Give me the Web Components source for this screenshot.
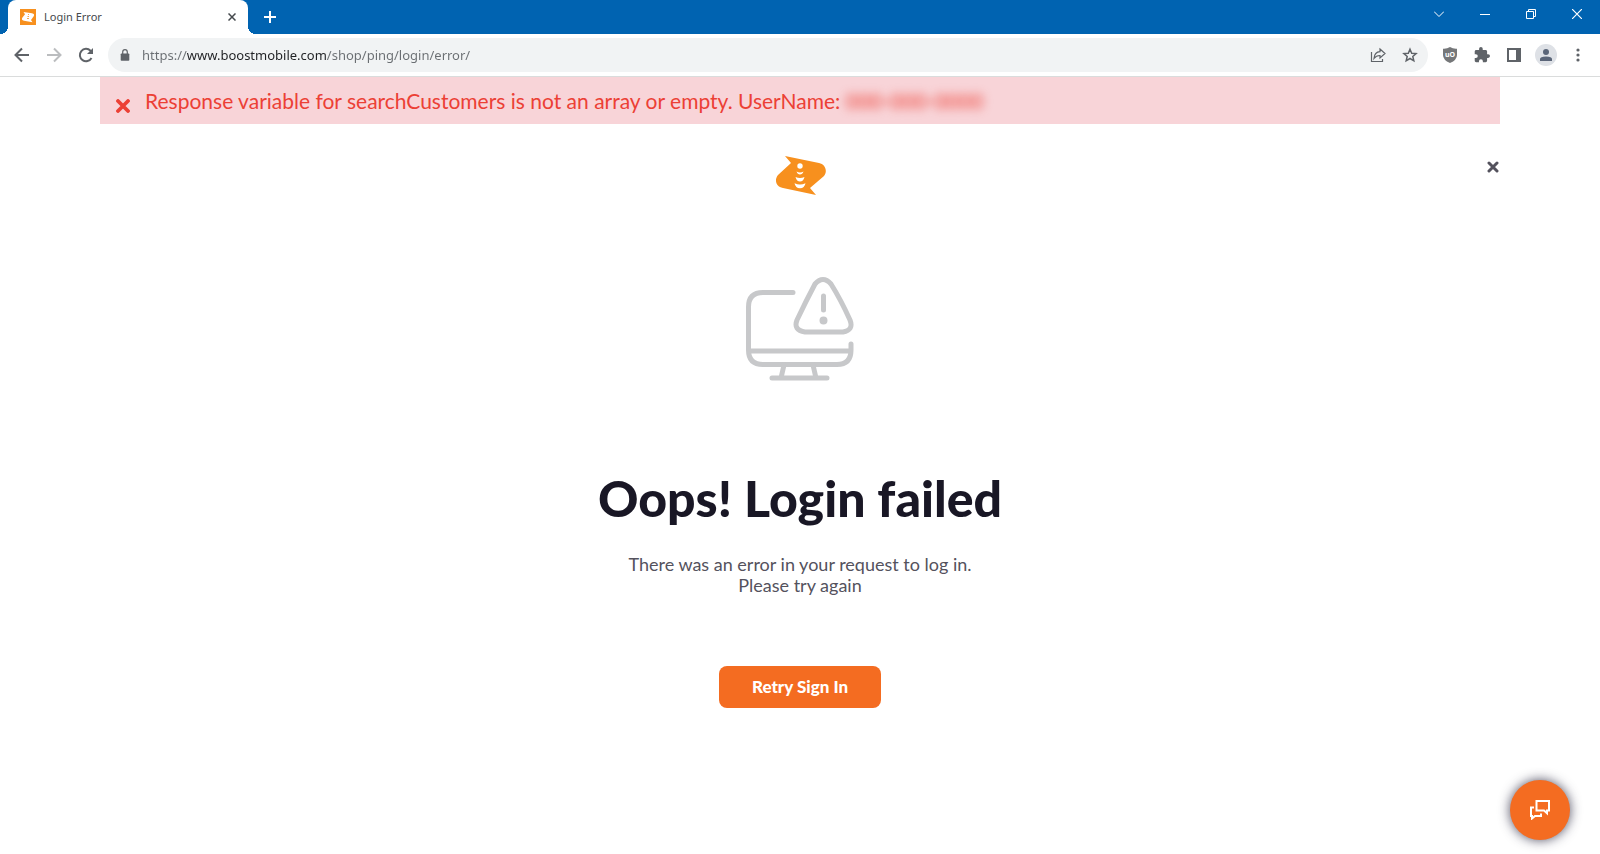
<!DOCTYPE html>
<html lang="en">
<head>
<meta charset="utf-8">
<meta name="viewport" content="width=device-width, initial-scale=1">
<title>Login Error</title>
<style>
  body {
    margin: 0;
    background: #fff;
    font-family: Lato, "Liberation Sans", sans-serif;
    --orange: #f46c21;
    --color-text: #54525d;
  }
</style>
</head>
<body>
<browser-window>
  <tab-strip slot="tabs">Login Error</tab-strip>
  <tool-bar slot="toolbar" url="https://www.boostmobile.com/shop/ping/login/error/"></tool-bar>
  <error-banner>Response variable for searchCustomers is not an array or empty. UserName: <span slot="user">000-000-0000</span></error-banner>
  <page-header></page-header>
  <login-failed>
    <span slot="title">Oops! Login failed</span>
    There was an error in your request to log in.<br>Please try again
    <span slot="action">Retry Sign In</span>
  </login-failed>
  <chat-button></chat-button>
</browser-window>

<script>
function define(name, html, setup) {
  const template = document.createElement('template');
  template.innerHTML = html;
  customElements.define(name, class extends HTMLElement {
    constructor() {
      super();
      this.attachShadow({ mode: 'open' });
      this.shadowRoot.appendChild(template.content.cloneNode(true));
    }

    connectedCallback() {
      if (setup) setup(this);
    }
  });
}

define('browser-window', `
  <style>
    :host { display: flex; flex-direction: column; min-height: 100vh; }
    main { flex: 1; padding: 0 100px; }
  </style>
  <slot name="tabs"></slot>
  <slot name="toolbar"></slot>
  <main><slot></slot></main>
`);

define('tab-strip', `
  <style>
    :host {
      display: flex;
      height: 34px;
      background: #0063b1;
      font: 11px/16px "Noto Sans", sans-serif;
      color: #45494d;
    }
    button { border: 0; padding: 0; background: none; color: #fff; display: grid; place-items: center; }
    .tab {
      position: relative;
      box-sizing: border-box;
      display: flex;
      align-items: center;
      gap: 8px;
      width: 240px;
      margin-left: 8px;
      padding: 0 8px 0 12px;
      background: #fff;
      border-radius: 8px 8px 0 0;
    }
    /* curved feet of the active tab */
    .tab::before, .tab::after {
      content: "";
      position: absolute;
      bottom: 0;
      width: 8px;
      height: 8px;
    }
    .tab::before { left: -8px; background: radial-gradient(circle at 0 0, transparent 8px, #fff 8px); }
    .tab::after { right: -8px; background: radial-gradient(circle at 100% 0, transparent 8px, #fff 8px); }
    .title { flex: 1; }
    .tab button { width: 16px; height: 16px; color: #45494d; }
    .new { width: 28px; margin-left: 8px; }
    .controls { display: flex; margin-left: auto; height: 28px; }
    .controls button { width: 46px; }
    svg { display: block; fill: none; stroke: currentColor; }
  </style>
  <div class="tab">
    <svg width="16" height="16" viewBox="0 0 16 16" stroke="none"><path fill="#f7901e" stroke="none" d="M0 0h16v16H0z"/><path fill="#fff" stroke="none" d="M3.500 3l8.500 1.300q3 .7 1.700 3L11 11l1.500 2.300-8.500-1.500Q1 11 2.300 8.700L5 5.200z"/><path stroke="#f7901e" stroke-width=".8" d="M8 5.500h1M7.500 7.500h1.500M7 9.500h2"/></svg>
    <span class="title"><slot></slot></span>
    <button aria-label="Close tab"><svg width="8" height="8" viewBox="0 0 8 8" stroke-width="1.500"><path d="M.5.5l7 7M7.500.5l-7 7"/></svg></button>
  </div>
  <button class="new" aria-label="New tab"><svg width="12" height="12" viewBox="0 0 12 12" stroke-width="2"><path d="M6 0v12M0 6h12"/></svg></button>
  <div class="controls">
    <button aria-label="Search tabs"><svg width="10" height="10" viewBox="0 0 10 10"><path d="M0 2.500l5 5 5-5"/></svg></button>
    <button aria-label="Minimize"><svg width="10" height="10" viewBox="0 0 10 10"><path d="M0 5.500h10"/></svg></button>
    <button aria-label="Restore"><svg width="10" height="10" viewBox="0 0 10 10"><path d="M.5 2.500h7v7h-7zM2.500 2.500v-2h7v7h-2"/></svg></button>
    <button aria-label="Close"><svg width="10" height="10" viewBox="0 0 10 10" stroke-width="1.200"><path d="M0 0l10 10M10 0L0 10"/></svg></button>
  </div>
`);

define('tool-bar', `
  <style>
    :host {
      display: flex;
      align-items: center;
      height: 42px;
      padding: 0 6px;
      border-bottom: 1px solid #dadcdc;
      background: #fff;
      color: #5f6368;
    }
    button { border: 0; padding: 0; width: 32px; height: 32px; background: none; color: inherit; display: grid; place-items: center; }
    button:disabled { color: #bbbdbf; }
    svg { display: block; fill: none; stroke: currentColor; stroke-width: 2; }
    .solid { fill: currentColor; stroke: none; }
    .address {
      flex: 1;
      display: flex;
      align-items: center;
      height: 34px;
      margin: 0 6px;
      padding-right: 2px;
      border-radius: 17px;
      background: #f1f3f4;
    }
    label { width: 34px; display: grid; place-items: center; }
    input {
      flex: 1;
      min-width: 0;
      border: 0;
      padding: 0;
      outline: 0;
      font: 13px/20px "Noto Sans", sans-serif;
      /* scheme and path stay grey, the host is dark */
      color: transparent;
      background: linear-gradient(90deg, #6a6e72 45px, #202124 45px 184px, #6a6e72 184px);
      background-clip: text;
    }
    .avatar { width: 22px; height: 22px; border-radius: 50%; background: #dee1e6; display: grid; place-items: center; color: #5a6578; }
    text { font: 700 7px "Noto Sans", sans-serif; fill: #fff; stroke: none; }
  </style>
  <button aria-label="Back"><svg width="16" height="16" viewBox="0 0 16 16"><path d="M15 8H2M8 1.500L1.500 8 8 14.500"/></svg></button>
  <button aria-label="Forward" disabled><svg width="16" height="16" viewBox="0 0 16 16"><path d="M1 8h13M8 1.500L14.500 8 8 14.500"/></svg></button>
  <button aria-label="Reload"><svg width="16" height="16" viewBox="0 0 16 16"><path d="M13.500 11A6.200 6.200 0 1 1 12.500 3.700L14 5.300"/><path class="solid" d="M15 1v6H9z"/></svg></button>
  <div class="address">
    <label for="url" aria-label="Address"><svg class="solid" width="10" height="12" viewBox="0 0 10 12"><path d="M1.500 4.500h7q.8 0 .8.800v5.700q0 .8-.8.800h-7q-.8 0-.8-.8V5.300q0-.8.800-.8z"/><path d="M2.700 5V3a2.300 2.300 0 0 1 4.600 0v2" fill="none" stroke="currentColor" style="stroke-width:1.200"/></svg></label>
    <input id="url" type="text" spellcheck="false">
    <button aria-label="Share"><svg width="16" height="16" viewBox="0 0 16 16" style="stroke-width:1.200"><path d="M1.500 5v9.500h11V12"/><path d="M10 2l5 4.500-5 4.500V8.500Q6.500 8.300 4 11.500 4.600 5 10 4.700z"/></svg></button>
    <button aria-label="Bookmark this tab"><svg width="16" height="16" viewBox="0 0 16 16" style="stroke-width:1.500"><path d="M8 2.200l1.700 4 4.400.4-3.300 2.900 1 4.300L8 11.500l-3.800 2.300 1-4.300-3.300-2.900 4.400-.4z"/></svg></button>
  </div>
  <button aria-label="uBlock Origin"><svg class="solid" width="16" height="16" viewBox="0 0 16 16"><path fill="#757779" d="M8 0q3 2 7 1.700V8q0 5-7 8-7-3-7-8V1.700Q5 2 8 0z"/><text x="8" y="10" text-anchor="middle">uO</text></svg></button>
  <button aria-label="Extensions"><svg class="solid" width="16" height="16" viewBox="1 1 22 22"><path d="M20.500 11H19V7c0-1.100-.9-2-2-2h-4V3.500a2.500 2.500 0 0 0-5 0V5H4c-1.100 0-2 .9-2 2v3.800h1.500a2.700 2.700 0 0 1 0 5.400H2V20c0 1.100.9 2 2 2h3.800v-1.500a2.700 2.700 0 0 1 5.400 0V22H17c1.100 0 2-.9 2-2v-4h1.500a2.500 2.500 0 0 0 0-5z"/></svg></button>
  <button aria-label="Side panel"><svg class="solid" width="14" height="14" viewBox="0 0 14 14"><path fill-rule="evenodd" d="M0 0h14v14H0zM2 2v10h7V2z"/></svg></button>
  <button aria-label="Profile"><span class="avatar"><svg class="solid" width="12" height="12" viewBox="0 0 12 12"><circle cx="6" cy="3" r="3"/><path d="M0 12v-2q0-2.500 6-2.500T12 10v2z"/></svg></span></button>
  <button aria-label="Menu"><svg class="solid" width="4" height="14" viewBox="0 0 4 14"><circle cx="2" cy="2" r="1.600"/><circle cx="2" cy="7" r="1.600"/><circle cx="2" cy="12" r="1.600"/></svg></button>
`, (el) => {
  el.shadowRoot.querySelector('#url').value = el.getAttribute('url');
});

define('error-banner', `
  <style>
    :host {
      display: flex;
      align-items: center;
      gap: 15px;
      min-height: 47px;
      padding: 0 16px;
      background: #f8d4d8;
      color: #ec4035;
      font-size: 21px;
      line-height: 28px;
    }
    svg { margin-top: 11px; flex: none; }
    ::slotted(span) { filter: blur(5px); }
  </style>
  <svg width="14" height="14" viewBox="0 0 14 14" stroke="currentColor" stroke-width="3.800" stroke-linecap="round"><path d="M2 2l10 10M12 2L2 12"/></svg>
  <div role="alert"><slot></slot> <slot name="user"></slot></div>
`);

define('page-header', `
  <style>
    :host { display: grid; grid-template-columns: 1fr auto 1fr; margin-top: 32px; }
    a { grid-column: 2; }
    button { justify-self: end; align-self: start; border: 0; margin-top: 5px; padding: 0 1px; height: 12px; background: none; color: var(--color-text); }
    svg { display: block; }
  </style>
  <a href="#" aria-label="Boost Mobile">
    <svg width="52" height="40" viewBox="0 0 52 40"><path fill="#f7901e" d="M11 0l34 7c6 1 9 8 5 13L36 32l6 7-33-7c-7-1-9-8-5-13L17 7z"/><g fill="#fff"><circle cx="26" cy="10" r="2.700"/><path d="M22.500 15.500q3.500 1.800 7 0-1 3-3.500 3t-3.500-3zM21.500 21q4.500 2 9 0-1.200 4.500-4.500 4.500T21.500 21zM20.500 27.200q5.500 2.500 11 0-1 5-5.500 5t-5.500-5z"/></g></svg>
  </a>
  <button aria-label="Close"><svg width="12" height="12" viewBox="0 0 12 12" stroke="currentColor" stroke-width="3" stroke-linecap="round"><path d="M2 2l8 8M10 2l-8 8"/></svg></button>
`);

define('login-failed', `
  <style>
    :host { display: flex; flex-direction: column; align-items: center; text-align: center; color: var(--color-text); }
    svg { margin-top: 80px; fill: none; stroke: #c7c8ca; stroke-width: 5; stroke-linecap: round; stroke-linejoin: round; }
    h1 { margin: 86px 0 0; font: 900 50px/60px Lato, sans-serif; color: #191725; }
    p { margin: 26px 0 0; font-size: 18px; line-height: 21px; }
    button {
      margin-top: 70px;
      padding: 0 33px;
      height: 42px;
      border: 0;
      border-radius: 8px;
      background: var(--orange);
      color: #fff;
      font: 900 17px/20px Lato, sans-serif;
    }
  </style>
  <svg width="108" height="106" viewBox="0 0 108 106" aria-hidden="true">
    <path d="M47 16.500H17Q2.500 16.500 2.500 31v43q0 14.500 14.500 14.500h74q14 0 14-14.500v-6M3 75h102"/>
    <path d="M38 89l-3 13M67 89l3 13M26 102h55"/>
    <path d="M69 8q8-9 16 0 10 16 19 36 4 10-7 12H59q-12-2-8-12Q60 25 69 8z"/>
    <path d="M77.500 20v14"/><circle cx="77.500" cy="44.500" r="2" stroke-width="4"/>
  </svg>
  <h1><slot name="title"></slot></h1>
  <p><slot></slot></p>
  <button><slot name="action"></slot></button>
`);

define('chat-button', `
  <style>
    :host { position: fixed; right: 30px; bottom: 14px; }
    button { display: grid; place-items: center; width: 60px; height: 60px; border: 0; padding: 0; border-radius: 50%; background: var(--orange); box-shadow: 0 0 12px #22203acc; }
    svg { fill: none; stroke: #fff; stroke-width: 2; }
  </style>
  <button aria-label="Chat"><svg width="20" height="20" viewBox="0 0 20 20"><path d="M6.500 1H19v9.500h-2v2.700l-3-2.700H6.500z"/><path d="M4 7.500H1V16h1v2.500L5 16h6v-2.500"/></svg></button>
`);
</script>
</body>
</html>
